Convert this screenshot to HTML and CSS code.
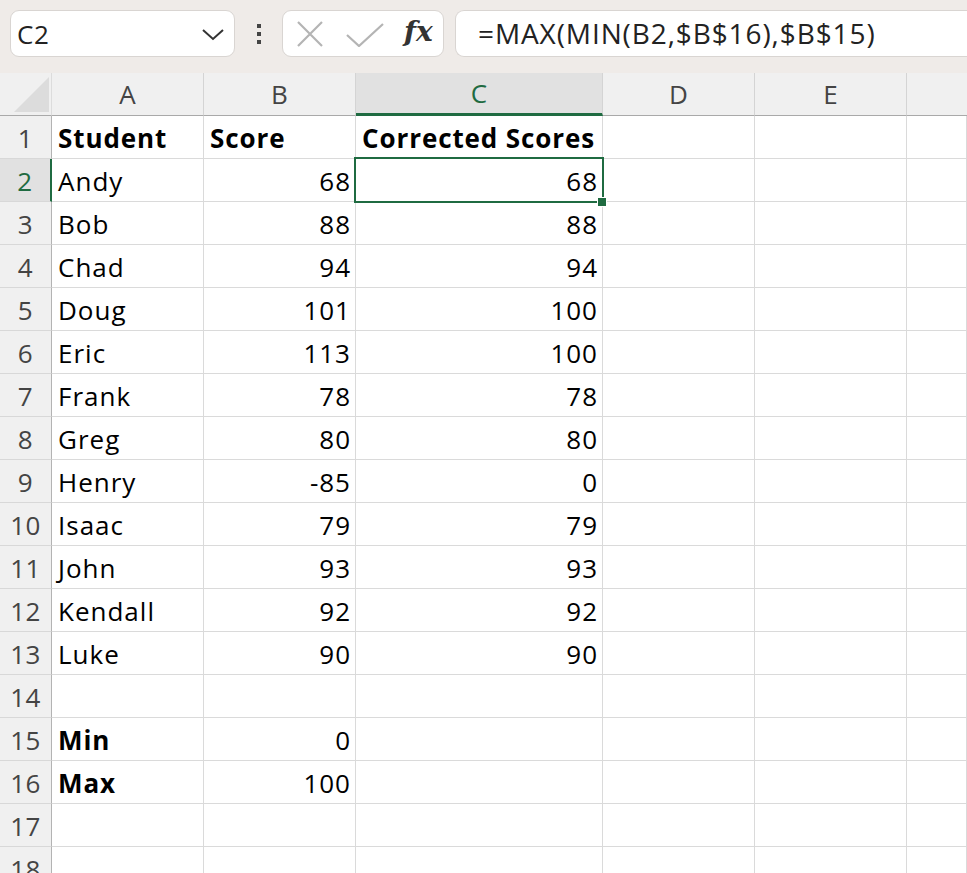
FILE: index.html
```html
<!DOCTYPE html>
<html>
<head>
<meta charset="utf-8">
<link rel="stylesheet" href="styles.css">
</head>
<body>
<div class="app">
  <div class="toolbar">
    <div class="namebox">
      <span class="name">C2</span>
      <svg class="chev" width="24" height="14" viewBox="0 0 24 14"><path d="M2 2 L12 11 L22 2" fill="none" stroke="#333" stroke-width="2"/></svg>
    </div>
    <div class="dots"><i></i><i></i><i></i></div>
    <div class="fxbox">
      <svg class="xicon" width="28" height="28" viewBox="0 0 28 28"><path d="M2 2 L26 26 M26 2 L2 26" stroke="#b4b4b4" stroke-width="2.2" fill="none"/></svg>
      <svg class="check" width="38" height="24" viewBox="0 0 38 24"><path d="M1 12 L13 23 L37 1" stroke="#b4b4b4" stroke-width="2.2" fill="none"/></svg>
      <span class="fx">fx</span>
    </div>
    <div class="formula">=MAX(MIN(B2,$B$16),$B$15)</div>
  </div>
  <div class="sheet">
    <div class="corner"><span class="tri"></span></div>
    <div class="ch">A</div><div class="ch">B</div><div class="ch sel">C</div><div class="ch">D</div><div class="ch">E</div><div class="ch last"></div>

    <div class="rh">1</div><div class="c b">Student</div><div class="c b">Score</div><div class="c b">Corrected Scores</div><div class="c"></div><div class="c"></div><div class="c"></div>
    <div class="rh sel">2</div><div class="c">Andy</div><div class="c n">68</div><div class="c n active">68<span class="handle"></span></div><div class="c"></div><div class="c"></div><div class="c"></div>
    <div class="rh">3</div><div class="c">Bob</div><div class="c n">88</div><div class="c n">88</div><div class="c"></div><div class="c"></div><div class="c"></div>
    <div class="rh">4</div><div class="c">Chad</div><div class="c n">94</div><div class="c n">94</div><div class="c"></div><div class="c"></div><div class="c"></div>
    <div class="rh">5</div><div class="c">Doug</div><div class="c n">101</div><div class="c n">100</div><div class="c"></div><div class="c"></div><div class="c"></div>
    <div class="rh">6</div><div class="c">Eric</div><div class="c n">113</div><div class="c n">100</div><div class="c"></div><div class="c"></div><div class="c"></div>
    <div class="rh">7</div><div class="c">Frank</div><div class="c n">78</div><div class="c n">78</div><div class="c"></div><div class="c"></div><div class="c"></div>
    <div class="rh">8</div><div class="c">Greg</div><div class="c n">80</div><div class="c n">80</div><div class="c"></div><div class="c"></div><div class="c"></div>
    <div class="rh">9</div><div class="c">Henry</div><div class="c n">-85</div><div class="c n">0</div><div class="c"></div><div class="c"></div><div class="c"></div>
    <div class="rh">10</div><div class="c">Isaac</div><div class="c n">79</div><div class="c n">79</div><div class="c"></div><div class="c"></div><div class="c"></div>
    <div class="rh">11</div><div class="c">John</div><div class="c n">93</div><div class="c n">93</div><div class="c"></div><div class="c"></div><div class="c"></div>
    <div class="rh">12</div><div class="c">Kendall</div><div class="c n">92</div><div class="c n">92</div><div class="c"></div><div class="c"></div><div class="c"></div>
    <div class="rh">13</div><div class="c">Luke</div><div class="c n">90</div><div class="c n">90</div><div class="c"></div><div class="c"></div><div class="c"></div>
    <div class="rh">14</div><div class="c"></div><div class="c"></div><div class="c"></div><div class="c"></div><div class="c"></div><div class="c"></div>
    <div class="rh">15</div><div class="c b">Min</div><div class="c n">0</div><div class="c"></div><div class="c"></div><div class="c"></div><div class="c"></div>
    <div class="rh">16</div><div class="c b">Max</div><div class="c n">100</div><div class="c"></div><div class="c"></div><div class="c"></div><div class="c"></div>
    <div class="rh">17</div><div class="c"></div><div class="c"></div><div class="c"></div><div class="c"></div><div class="c"></div><div class="c"></div>
    <div class="rh">18</div><div class="c"></div><div class="c"></div><div class="c"></div><div class="c"></div><div class="c"></div><div class="c"></div>
  </div>
</div>
</body>
</html>
```
FILE: styles.css
```css
html, body {
  margin: 0;
  padding: 0;
  overflow: hidden;
  background: #ffffff;
}
.app {
  width: 967px;
  height: 873px;
  overflow: hidden;
  font-family: "Open Sans", "Noto Sans", sans-serif;
}
.toolbar {
  height: 73px;
  background: #efebe8;
  display: flex;
  align-items: flex-start;
  padding: 10px 0 0 10px;
  box-sizing: border-box;
}
.namebox {
  width: 225px;
  height: 47px;
  box-sizing: border-box;
  background: #fff;
  border: 1px solid #d9d5d2;
  border-radius: 9px;
  display: flex;
  align-items: center;
  justify-content: space-between;
  padding: 0 9px 0 6px;
}
.name {
  font-size: 26px;
  color: #222;
  letter-spacing: 0.5px;
}
.chev { margin-top: 2px; }
.dots {
  width: 47px;
  height: 47px;
  display: flex;
  flex-direction: column;
  align-items: center;
  justify-content: center;
  gap: 4px;
}
.dots i {
  display: block;
  width: 4px;
  height: 4px;
  background: #444;
}
.fxbox {
  width: 162px;
  height: 47px;
  box-sizing: border-box;
  background: #fff;
  border: 1px solid #d9d5d2;
  border-radius: 9px;
  display: flex;
  align-items: center;
  padding: 0 0 0 13px;
}
.xicon { margin-right: 22px; }
.check { margin-right: 20px; margin-top: 2px; }
.fx {
  font-family: "DejaVu Serif", "Liberation Serif", serif;
  font-style: italic;
  font-weight: bold;
  font-size: 28px;
  color: #333;
  margin-top: -4px;
}
.formula {
  margin-left: 11px;
  flex: 1;
  height: 47px;
  box-sizing: border-box;
  background: #fff;
  border: 1px solid #d9d5d2;
  border-right: none;
  border-radius: 9px 0 0 9px;
  font-size: 28px;
  letter-spacing: 0.9px;
  color: #222;
  line-height: 45px;
  padding-left: 22px;
  white-space: nowrap;
}
.sheet {
  display: grid;
  grid-template-columns: 52px 152px 152px 247px 152px 152px 1fr;
  grid-auto-rows: 43px;
}
.sheet > div {
  box-sizing: border-box;
  font-size: 26px;
  line-height: 42px;
  padding-top: 1px;
  white-space: nowrap;
}
.corner {
  background: #f0f0f0;
  border-right: 1px solid #dcdcdc;
  border-bottom: 1px solid #a9a9a9;
  position: relative;
}
.tri {
  position: absolute;
  left: 14px;
  top: 4px;
  width: 35px;
  height: 35px;
  background: #dcdcdc;
  clip-path: polygon(100% 0, 100% 100%, 0 100%);
}
.ch {
  background: #f0f0f0;
  border-right: 1px solid #d4d4d4;
  border-bottom: 1px solid #a9a9a9;
  text-align: center;
  color: #444;
}
.sheet > .ch { padding-top: 0; line-height: 43px; }
.sheet > .ch.sel {
  background: #e1e1e1;
  color: #1f6b41;
  border-bottom: 3px solid #1f6b41;
  line-height: 41px;
}
.ch.last { border-right: none; }
.rh {
  background: #f0f0f0;
  border-right: 1px solid #b3b3b3;
  border-bottom: 1px solid #d8d8d8;
  text-align: center;
  color: #444;
  letter-spacing: 0.5px;
}
.rh.sel {
  background: #e1e1e1;
  color: #1f6b41;
  border-right: 2px solid #1f6b41;
}
.c {
  border-right: 1px solid #dadada;
  border-bottom: 1px solid #dadada;
  color: #000;
  padding: 0 6px;
  letter-spacing: 1px;
}
.c.b { font-weight: bold; letter-spacing: 0.9px; }
.c.n { text-align: right; padding-right: 4px; }
.c.active {
  position: relative;
}
.c.active::before {
  content: "";
  position: absolute;
  left: -2px;
  top: -2px;
  right: -2px;
  bottom: -2px;
  border: 2px solid #1f6b41;
  pointer-events: none;
}
.handle {
  position: absolute;
  right: -5px;
  bottom: -6px;
  width: 8px;
  height: 8px;
  background: #1f6b41;
  border: 1px solid #fff;
  z-index: 2;
}
```
